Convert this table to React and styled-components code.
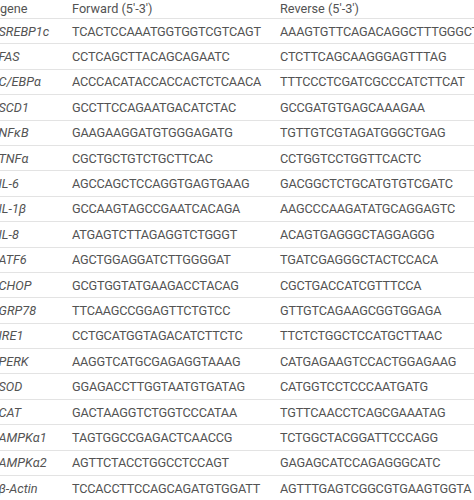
import React from "react";
import styled, { createGlobalStyle } from "styled-components";

const Global = createGlobalStyle`
  html, body { margin: 0; padding: 0; background: #ffffff; }
  body { overflow: hidden; width: 474px; height: 500px; }
`;

const Table = styled.div`
  width: 520px;
  margin-left: -1.5px;
  font-family: Roboto, "Liberation Sans", Arial, sans-serif;
  font-size: 12.7px;
  color: #535353;
`;

const Row = styled.div`
  display: grid;
  grid-template-columns: 73.5px 208px 1fr;
  align-items: center;
  box-sizing: border-box;
  height: ${(p) => (p.$header ? "18px" : "25.4px")};
  border-top: ${(p) => (p.$header ? "none" : "1.5px solid #e3e3e3")};
  padding-bottom: ${(p) => (p.$header ? "2px" : "0")};
`;

const Cell = styled.div`
  white-space: nowrap;
  overflow: visible;
  font-style: ${(p) => (p.$italic ? "italic" : "normal")};
  letter-spacing: ${(p) => (p.$seq ? "-0.2px" : "0")};
  padding-left: ${(p) => (p.$first ? "1.5px" : "0")};
`;

const rows = [
  ["SREBP1c", "TCACTCCAAATGGTGGTCGTCAGT", "AAAGTGTTCAGACAGGCTTTGGGCT"],
  ["FAS", "CCTCAGCTTACAGCAGAATC", "CTCTTCAGCAAGGGAGTTTAG"],
  ["C/EBPα", "ACCCACATACCACCACTCTCAACA", "TTTCCCTCGATCGCCCATCTTCAT"],
  ["SCD1", "GCCTTCCAGAATGACATCTAC", "GCCGATGTGAGCAAAGAA"],
  ["NFκB", "GAAGAAGGATGTGGGAGATG", "TGTTGTCGTAGATGGGCTGAG"],
  ["TNFα", "CGCTGCTGTCTGCTTCAC", "CCTGGTCCTGGTTCACTC"],
  ["IL-6", "AGCCAGCTCCAGGTGAGTGAAG", "GACGGCTCTGCATGTGTCGATC"],
  ["IL-1β", "GCCAAGTAGCCGAATCACAGA", "AAGCCCAAGATATGCAGGAGTC"],
  ["IL-8", "ATGAGTCTTAGAGGTCTGGGT", "ACAGTGAGGGCTAGGAGGG"],
  ["ATF6", "AGCTGGAGGATCTTGGGGAT", "TGATCGAGGGCTACTCCACA"],
  ["CHOP", "GCGTGGTATGAAGACCTACAG", "CGCTGACCATCGTTTCCA"],
  ["GRP78", "TTCAAGCCGGAGTTCTGTCC", "GTTGTCAGAAGCGGTGGAGA"],
  ["IRE1", "CCTGCATGGTAGACATCTTCTC", "TTCTCTGGCTCCATGCTTAAC"],
  ["PERK", "AAGGTCATGCGAGAGGTAAAG", "CATGAGAAGTCCACTGGAGAAG"],
  ["SOD", "GGAGACCTTGGTAATGTGATAG", "CATGGTCCTCCCAATGATG"],
  ["CAT", "GACTAAGGTCTGGTCCCATAA", "TGTTCAACCTCAGCGAAATAG"],
  ["AMPKα1", "TAGTGGCCGAGACTCAACCG", "TCTGGCTACGGATTCCCAGG"],
  ["AMPKα2", "AGTTCTACCTGGCCTCCAGT", "GAGAGCATCCAGAGGGCATC"],
  ["β-Actin", "TCCACCTTCCAGCAGATGTGGATT", "AGTTTGAGTCGGCGTGAAGTGGTA"],
];

export default function App() {
  return (
    <>
      <Global />
      <Table>
        <Row $header>
          <Cell $first>gene</Cell>
          <Cell>Forward (5'-3')</Cell>
          <Cell>Reverse (5'-3')</Cell>
        </Row>
        {rows.map(([g, f, r]) => (
          <Row key={g}>
            <Cell $italic>{g}</Cell>
            <Cell $seq>{f}</Cell>
            <Cell $seq>{r}</Cell>
          </Row>
        ))}
      </Table>
    </>
  );
}
